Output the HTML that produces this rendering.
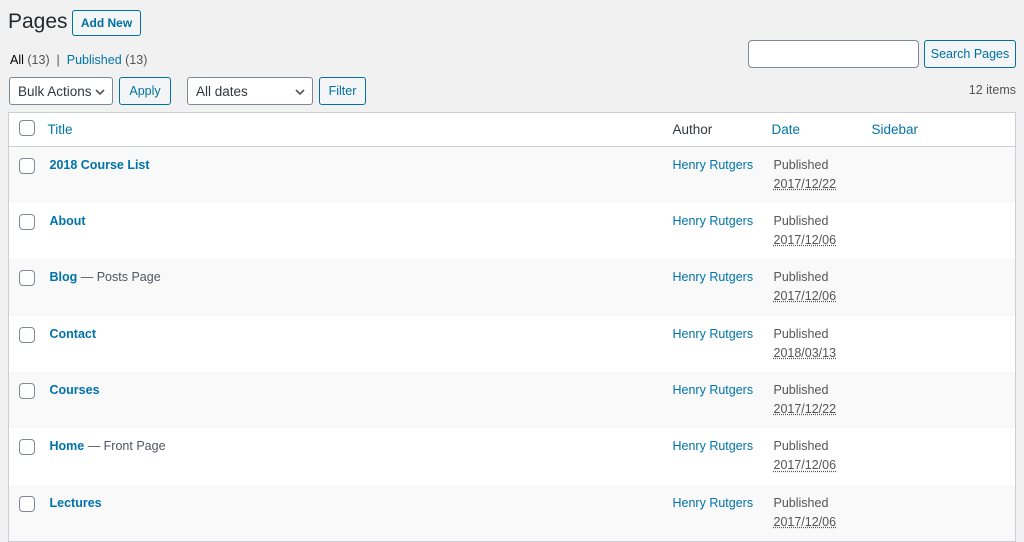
<!DOCTYPE html>
<html><head><style>
*{box-sizing:border-box;margin:0;padding:0}
body{width:1024px;height:532px;overflow:hidden;background:#f1f1f1;font-family:"Liberation Sans",sans-serif;font-size:12.5px;color:#444;position:relative}
.a{position:absolute}
a,.l{color:#0073aa}
.btn{position:absolute;border:1px solid #0071a1;background:#f3f5f6;color:#0071a1;border-radius:3px;font-size:12.5px;text-align:center}
.sel{position:absolute;border:1px solid #7e8993;background:#fff;border-radius:3px;font-size:13.5px;color:#32373c;padding-left:8px}
.sel svg{position:absolute;right:7px;top:10px}
table{position:absolute;left:8px;top:112px;width:1008px;border:1px solid #ccd0d4;border-collapse:collapse;background:#fff}
td{vertical-align:top}
.cb{display:inline-block;width:16px;height:16px;border:1px solid #7e8993;border-radius:4px;background:#fff}
tr.h td{height:34px;border-bottom:1px solid #ccd0d4;font-size:13.5px;vertical-align:middle}
tr.r td{height:56.4px;padding-top:11px}
tr.r:nth-child(even) td{background:#f9f9f9}
.t{font-weight:bold;font-size:12.5px;color:#0073aa;padding-left:2px}
.t span{font-weight:normal;color:#50575e}
.d{color:#555;line-height:19px;padding-top:9px!important;padding-left:2px}
.d u{text-decoration:underline dotted}
</style></head><body>
<div class="a" style="left:8px;top:10px;font-size:21px;color:#23282d">Pages</div>
<div class="btn" style="left:72px;top:10px;width:69px;height:26px;line-height:24px;font-weight:bold;font-size:12px">Add New</div>
<div class="a" style="left:10px;top:53px;color:#555"><b style="color:#000;font-weight:normal">All</b> (13) &nbsp;| &nbsp;<span class="l">Published</span> (13)</div>
<div class="sel" style="left:9px;top:77px;width:104px;height:28px;line-height:27px">Bulk Actions<svg width="10" height="8"><path d="M1 2l4 4 4-4" stroke="#555" stroke-width="1.6" fill="none"/></svg></div>
<div class="btn" style="left:119px;top:77px;width:52px;height:28px;line-height:27px">Apply</div>
<div class="sel" style="left:187px;top:77px;width:126px;height:28px;line-height:27px">All dates<svg width="10" height="8"><path d="M1 2l4 4 4-4" stroke="#555" stroke-width="1.6" fill="none"/></svg></div>
<div class="btn" style="left:319px;top:77px;width:47px;height:28px;line-height:27px">Filter</div>
<div class="a" style="left:748px;top:40px;width:171px;height:28px;border:1px solid #7e8993;border-radius:4px;background:#fff"></div>
<div class="btn" style="left:924px;top:40px;width:92px;height:28px;line-height:26px">Search Pages</div>
<div class="a" style="right:8px;top:83px;color:#555">12 items</div>
<table>
<tr class="h"><td style="width:39px;padding-left:10px"><span class="cb"></span></td><td style="width:625px" class="l">Title</td><td style="width:99px;color:#32373c">Author</td><td style="width:100px" class="l">Date</td><td class="l">Sidebar</td></tr>
<tr class="r"><td style="padding-left:10px"><span class="cb"></span></td><td class="t">2018 Course List</td><td class="l">Henry Rutgers</td><td class="d">Published<br><u>2017/12/22</u></td><td></td></tr>
<tr class="r"><td style="padding-left:10px"><span class="cb"></span></td><td class="t">About</td><td class="l">Henry Rutgers</td><td class="d">Published<br><u>2017/12/06</u></td><td></td></tr>
<tr class="r"><td style="padding-left:10px"><span class="cb"></span></td><td class="t">Blog <span>— Posts Page</span></td><td class="l">Henry Rutgers</td><td class="d">Published<br><u>2017/12/06</u></td><td></td></tr>
<tr class="r"><td style="padding-left:10px"><span class="cb"></span></td><td class="t">Contact</td><td class="l">Henry Rutgers</td><td class="d">Published<br><u>2018/03/13</u></td><td></td></tr>
<tr class="r"><td style="padding-left:10px"><span class="cb"></span></td><td class="t">Courses</td><td class="l">Henry Rutgers</td><td class="d">Published<br><u>2017/12/22</u></td><td></td></tr>
<tr class="r"><td style="padding-left:10px"><span class="cb"></span></td><td class="t">Home <span>— Front Page</span></td><td class="l">Henry Rutgers</td><td class="d">Published<br><u>2017/12/06</u></td><td></td></tr>
<tr class="r"><td style="padding-left:10px"><span class="cb"></span></td><td class="t">Lectures</td><td class="l">Henry Rutgers</td><td class="d">Published<br><u>2017/12/06</u></td><td></td></tr>
</table>
</body></html>
